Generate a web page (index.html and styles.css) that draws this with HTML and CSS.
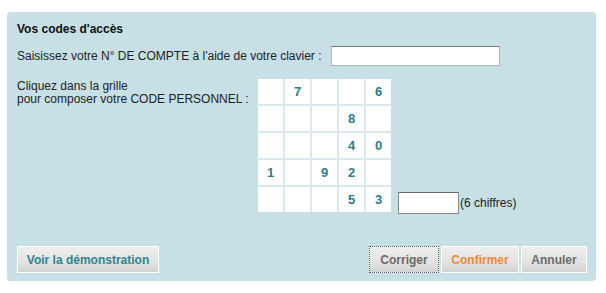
FILE: index.html
```html
<!DOCTYPE html>
<html lang="fr">
<head>
<meta charset="utf-8">
<title>Vos codes d'accès</title>
<link rel="stylesheet" href="styles.css">
</head>
<body>
<div class="panel">
  <div class="title">Vos codes d'accès</div>
  <div class="row-account">
    <span class="label">Saisissez votre N° DE COMPTE à l'aide de votre clavier :</span>
    <input class="account-input" type="text">
  </div>
  <div class="row-code">
    <div class="code-label">Cliquez dans la grille<br>pour composer votre CODE PERSONNEL :</div>
    <div class="grid">
      <div class="cell"></div><div class="cell">7</div><div class="cell"></div><div class="cell"></div><div class="cell">6</div>
      <div class="cell"></div><div class="cell"></div><div class="cell"></div><div class="cell">8</div><div class="cell"></div>
      <div class="cell"></div><div class="cell"></div><div class="cell"></div><div class="cell">4</div><div class="cell">0</div>
      <div class="cell">1</div><div class="cell"></div><div class="cell">9</div><div class="cell">2</div><div class="cell"></div>
      <div class="cell"></div><div class="cell"></div><div class="cell"></div><div class="cell">5</div><div class="cell">3</div>
    </div>
    <div class="code-entry">
      <input class="code-input" type="password">
      <span class="hint">(6 chiffres)</span>
    </div>
  </div>
  <div class="buttons">
    <button class="btn btn-demo">Voir la démonstration</button>
    <div class="actions">
      <button class="btn btn-gray btn-focus">Corriger</button>
      <button class="btn btn-orange">Confirmer</button>
      <button class="btn btn-gray">Annuler</button>
    </div>
  </div>
</div>
</body>
</html>
```

FILE: styles.css
```css
html, body {
  margin: 0;
  padding: 0;
  background: #ffffff;
}
body {
  font-family: "Liberation Sans", Arial, sans-serif;
  font-size: 12px;
  color: #222222;
}
.panel {
  box-sizing: border-box;
  margin: 12px 0 0 7px;
  width: 589px;
  height: 269px;
  padding: 10px 9px 8px 10px;
  background: #c6e0e5;
  border-radius: 4px;
  display: flex;
  flex-direction: column;
}
.title {
  font-weight: bold;
  line-height: 14px;
  color: #111111;
}
.row-account {
  margin-top: 10px;
  display: flex;
  align-items: center;
  height: 20px;
}
.label {
  line-height: 14px;
}
.account-input {
  box-sizing: border-box;
  margin: 0 0 0 9px;
  width: 169px;
  height: 20px;
  border: 1px solid #b4b4b4;
  border-top-color: #7a7a7a;
  background: #ffffff;
  padding: 0;
}
.row-code {
  margin-top: 13px;
  display: flex;
  align-items: flex-start;
}
.code-label {
  width: 241px;
  line-height: 13px;
  padding-top: 1px;
}
.grid {
  display: grid;
  grid-template-columns: repeat(5, 25px);
  grid-auto-rows: 25px;
  gap: 2px;
  background: #dbe9ec;
}
.cell {
  background: #ffffff;
  color: #2c7d89;
  font-weight: bold;
  font-size: 13px;
  display: flex;
  align-items: center;
  justify-content: center;
}
.code-entry {
  align-self: flex-end;
  margin-left: 7px;
  margin-bottom: -2px;
  display: flex;
  align-items: center;
}
.code-input {
  box-sizing: border-box;
  margin: 0;
  padding: 0;
  width: 61px;
  height: 22px;
  border: 1px solid #8a8a8a;
  border-top-color: #6a6a6a;
  background: #ffffff;
}
.hint {
  margin-left: 1px;
}
.buttons {
  margin-top: auto;
  display: flex;
  justify-content: space-between;
  align-items: flex-end;
}
.actions {
  display: flex;
  gap: 2px;
}
.btn {
  box-sizing: border-box;
  height: 27px;
  margin: 0;
  padding: 0;
  white-space: nowrap;
  border: 1px solid #ffffff;
  background: linear-gradient(#efefef, #e2e2e2 60%, #d2d2d2);
  font-family: "Liberation Sans", Arial, sans-serif;
  font-size: 12px;
  font-weight: bold;
  cursor: pointer;
}
.btn-demo {
  width: 142px;
  color: #2d8590;
}
.btn-gray {
  color: #6a6a6a;
}
.btn-orange {
  color: #ef8a32;
}
.btn-focus {
  outline: 1px dotted #555555;
  outline-offset: -1px;
}
.actions .btn:nth-child(1) { width: 70px; }
.actions .btn:nth-child(2) { width: 78px; }
.actions .btn:nth-child(3) { width: 66px; }
```
